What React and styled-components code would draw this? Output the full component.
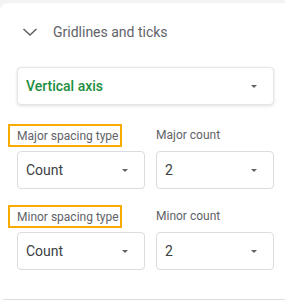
import React from "react";
import styled, { createGlobalStyle } from "styled-components";

const Global = createGlobalStyle`
  html, body { margin: 0; padding: 0; background: #f3f3f3; }
  body { font-family: Roboto, "Liberation Sans", sans-serif; }
`;

const Panel = styled.div`
  margin-top: 3px;
  width: 285px;
  height: 297px;
  box-sizing: border-box;
  background: #fff;
  border-top-left-radius: 8px;
  padding: 0 11px 0 17px;
  display: flex;
  flex-direction: column;
  position: relative;
`;

const Header = styled.div`
  height: 58px;
  display: flex;
  align-items: center;
  gap: 15px;
  padding-left: 5px;
  color: #5f6368;
  font-size: 14px;
`;

const Select = styled.div`
  box-sizing: border-box;
  height: 38px;
  margin-top: ${(p) => p.$mt || 0}px;
  display: flex;
  align-items: center;
  justify-content: space-between;
  padding: 0 16px 0 8px;
  border: 1px solid ${(p) => (p.$raised ? "#e6e6e6" : "#dadce0")};
  border-radius: 4px;
  box-shadow: ${(p) => (p.$raised ? "0 1px 3px rgba(60,64,67,0.18)" : "none")};
  background: #fff;
  color: ${(p) => p.$color || "#3c4043"};
  font-size: 14px;
  font-weight: ${(p) => p.$weight || 400};
`;

const Arrow = styled.span`
  width: 0;
  height: 0;
  border-left: 3px solid transparent;
  border-right: 3px solid transparent;
  border-top: 3px solid #5f6368;
`;

const Grid = styled.div`
  display: grid;
  grid-template-columns: 128px 118px;
  column-gap: 11px;
  row-gap: 4px;
  margin-top: ${(p) => p.$mt}px;
`;

const Label = styled.div`
  height: 22px;
  display: flex;
  align-items: center;
  font-size: 12px;
  color: #5f6368;
  white-space: nowrap;
`;

const Highlighted = styled(Label)`
  box-sizing: border-box;
  height: 23px;
  margin-left: -9px;
  padding: 0 0 0 7px;
  width: 114px;
  border: 2.5px solid #f9ab00;
`;

const Divider = styled.div`
  position: absolute;
  left: 3px;
  right: 0;
  bottom: 0;
  height: 1px;
  background: #dadce0;
`;

const Chevron = () => (
  <svg width="16" height="10" viewBox="0 0 16 10">
    <path d="M1.5 2 L8 8 L14.5 2" fill="none" stroke="#5f6368" strokeWidth="1.6" />
  </svg>
);

const Row = ({ label, countLabel, mt }) => (
  <Grid $mt={mt}>
    <Highlighted>{label}</Highlighted>
    <Label>{countLabel}</Label>
    <Select>
      Count
      <Arrow />
    </Select>
    <Select>
      2
      <Arrow />
    </Select>
  </Grid>
);

export default function App() {
  return (
    <>
      <Global />
      <Panel>
        <Header>
          <Chevron />
          Gridlines and ticks
        </Header>
        <Select $raised $color="#1e8e3e" $weight={500} $mt={6}>
          Vertical axis
          <Arrow />
        </Select>
        <Row label="Major spacing type" countLabel="Major count" mt={19} />
        <Row label="Minor spacing type" countLabel="Minor count" mt={16} />
        <Divider />
      </Panel>
    </>
  );
}
